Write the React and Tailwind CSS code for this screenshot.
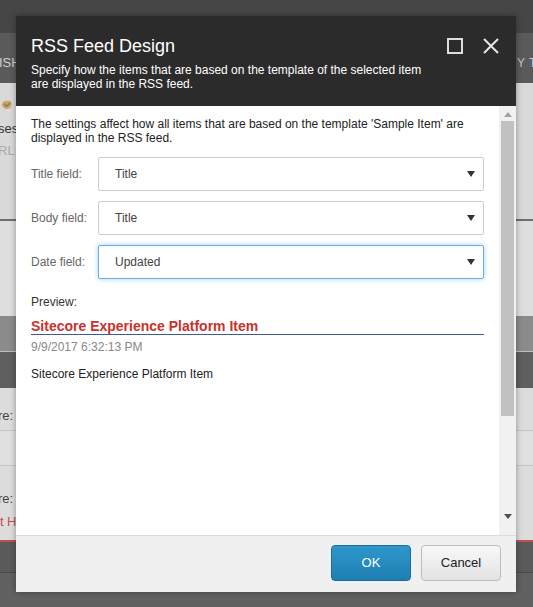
import React from "react";

function SelectBox({ value, focused }) {
  return (
    <div
      className={
        "flex-1 h-[34px] flex items-center justify-between pl-[16px] pr-[8px] bg-white rounded-[2px] border text-[12px] text-[#444] " +
        (focused
          ? "border-[#66afe9] shadow-[0_0_5px_rgba(102,175,233,0.6)]"
          : "border-[#cccccc]")
      }
    >
      <span>{value}</span>
      <svg width="8" height="6" viewBox="0 0 8 6">
        <polygon points="0,0 8,0 4,6" fill="#333" />
      </svg>
    </div>
  );
}

function FieldRow({ label, value, focused }) {
  return (
    <div className="flex items-center">
      <span className="w-[67px] text-[12px] text-[#666]">{label}</span>
      <SelectBox value={value} focused={focused} />
    </div>
  );
}

export default function App() {
  return (
    <div className="relative w-[533px] h-[607px] overflow-hidden font-['Liberation_Sans',Arial,sans-serif]">
      {/* background page (dimmed) */}
      <div className="flex flex-col h-full">
        <div className="h-[33px] bg-[#464646]" />
        <div className="h-[50px] bg-[#5a5a5a] flex items-center justify-between text-[13px] text-[#cfcfcf]">
          <span className="-ml-[1px] pt-[10px]">ISH</span>
          <span className="w-[17px] shrink-0 flex gap-[4px] pl-[1px] pt-[10px] text-[12px] text-[#b9c6cf]">
            <span>Y</span>
            <span>T</span>
          </span>
        </div>
        <div className="h-[136px] bg-[#d9d9d9] flex flex-col text-[13px]">
          <div className="h-[28px] flex items-end pl-[1px]">
            <svg width="12" height="12" viewBox="0 0 12 12">
              <path d="M1 6 C1 2 5 1 9 2 C11 3 11 7 9 9 C6 11 2 10 1 6Z" fill="#d9a24a" />
              <path d="M3 5 L6 7 L9 4" stroke="#4f86b9" strokeWidth="1.5" fill="none" />
            </svg>
          </div>
          <span className="mt-[8px] -ml-[2px] text-[#333]">ses</span>
          <span className="mt-[2px] -ml-[2px] text-[#aaa]">RL</span>
        </div>
        <div className="h-[2px] bg-[#6e6e6e]" />
        <div className="h-[95px] bg-[#dedede]" />
        <div className="h-[35px] bg-[#8b8b8b]" />
        <div className="h-[1px] bg-[#bdbdbd]" />
        <div className="h-[36px] bg-[#5f5f5f]" />
        <div className="h-[42px] bg-[#dcdcdc] flex items-end pb-[5px] text-[13px] text-[#444]">
          <span className="-ml-[2px]">re:</span>
        </div>
        <div className="h-[1px] bg-[#c6c6c6]" />
        <div className="h-[34px] bg-[#e0e0e0]" />
        <div className="h-[1px] bg-[#c6c6c6]" />
        <div className="h-[74px] bg-[#dcdcdc] flex flex-col text-[13px] pt-[23px]">
          <span className="-ml-[2px] text-[#444]">re:</span>
          <span className="-ml-[3px] mt-[3px] text-[#c0504d]">it H</span>
        </div>
        <div className="h-[2px] bg-[#c0504d]" />
        <div className="h-[30px] bg-[#5a5a5a]" />
        <div className="h-[1px] bg-[#4a4a4a]" />
        <div className="flex-1 bg-[#616161]" />
      </div>

      {/* dialog */}
      <div className="absolute left-[16px] top-[16px] w-[500px] h-[576px] flex flex-col shadow-[0_0_6px_rgba(0,0,0,0.35)]">
        {/* header */}
        <div className="h-[90px] bg-[#2b2b2b] flex justify-between pl-[15px] pr-[17px]">
          <div className="pt-[20px]">
            <div className="text-[18px] leading-[21px] text-white">RSS Feed Design</div>
            <div className="mt-[6px] w-[400px] text-[12px] leading-[14px] text-white">
              Specify how the items that are based on the template of the selected item are displayed in the RSS feed.
            </div>
          </div>
          <div className="flex gap-[20px] pt-[22px]">
            <svg width="16" height="16" viewBox="0 0 16 16">
              <rect x="1" y="1" width="14" height="14" fill="none" stroke="#dedede" strokeWidth="2" />
            </svg>
            <svg width="16" height="16" viewBox="0 0 16 16">
              <path d="M1 1 L15 15 M15 1 L1 15" stroke="#e6e6e6" strokeWidth="2" />
            </svg>
          </div>
        </div>

        {/* content */}
        <div className="h-[429px] flex bg-white">
          <div className="flex-1 flex flex-col pl-[15px] pr-[15px] pt-[11px]">
            <p className="text-[12px] leading-[14px] text-[#222]">
              The settings affect how all items that are based on the template 'Sample Item' are displayed in the RSS feed.
            </p>
            <div className="mt-[12px] flex flex-col gap-[10px]">
              <FieldRow label="Title field:" value="Title" />
              <FieldRow label="Body field:" value="Title" />
              <FieldRow label="Date field:" value="Updated" focused />
            </div>
            <div className="mt-[16px] text-[12px] leading-[14px] text-[#333]">Preview:</div>
            <div className="mt-[9px] text-[14px] leading-[16px] font-bold text-[#c8322c] border-b border-[#3b5b95]">
              Sitecore Experience Platform Item
            </div>
            <div className="mt-[5px] text-[12px] leading-[14px] text-[#888]">9/9/2017 6:32:13 PM</div>
            <div className="mt-[13px] text-[12px] leading-[14px] text-[#222]">Sitecore Experience Platform Item</div>
          </div>
          {/* scrollbar */}
          <div className="w-[17px] bg-[#f1f1f1] flex flex-col items-center">
            <div className="h-[15px] flex items-center justify-center pt-[1px]">
              <svg width="8" height="5" viewBox="0 0 8 5">
                <polygon points="0,5 8,5 4,0" fill="#a3a3a3" />
              </svg>
            </div>
            <div className="w-[13px] h-[295px] bg-[#c1c1c1]" />
            <div className="flex-1" />
            <div className="h-[24px] flex items-start justify-center pt-[3px]">
              <svg width="8" height="5" viewBox="0 0 8 5">
                <polygon points="0,0 8,0 4,5" fill="#505050" />
              </svg>
            </div>
          </div>
        </div>

        {/* footer */}
        <div className="flex-1 bg-[#f0f0f0] border-t border-[#dcdcdc] flex justify-end items-start gap-[10px] pt-[9px] pr-[15px]">
          <button className="w-[80px] h-[36px] rounded-[4px] border border-[#1b6d99] bg-gradient-to-b from-[#2f97cb] to-[#1e7fb2] text-white text-[13px]">
            OK
          </button>
          <button className="w-[80px] h-[36px] rounded-[4px] border border-[#bcbcbc] bg-gradient-to-b from-[#f8f8f8] to-[#e3e3e3] text-[#222] text-[13px]">
            Cancel
          </button>
        </div>
      </div>
    </div>
  );
}
